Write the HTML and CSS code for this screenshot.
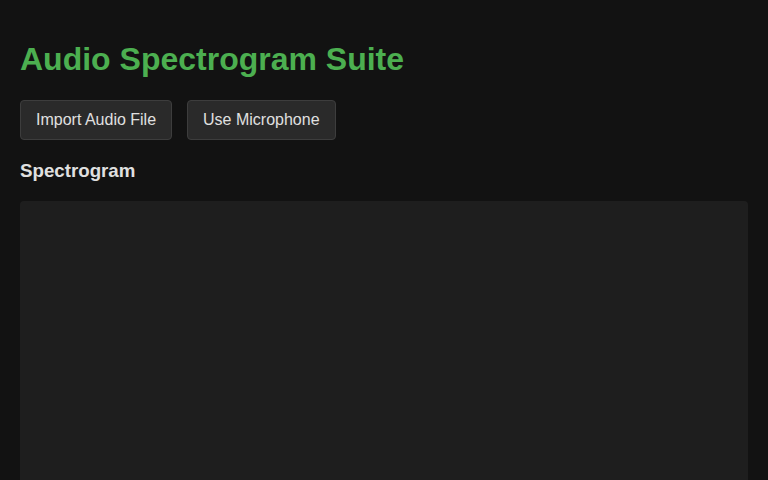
FILE: index.html
```html
<!DOCTYPE html>
<html lang="en">
<head>
<meta charset="utf-8">
<title>Audio Spectrogram Suite</title>
<link rel="stylesheet" href="styles.css">
</head>
<body>
  <h1 class="title">Audio Spectrogram Suite</h1>
  <div class="controls">
    <button class="btn">Import Audio File</button>
    <button class="btn">Use Microphone</button>
  </div>
  <h3 class="section-title">Spectrogram</h3>
  <div class="spectrogram"></div>
</body>
</html>
```

FILE: styles.css
```css
html, body {
  background: #121212;
}
body {
  margin: 0;
  padding: 20px;
  color: #e0e0e0;
  font-family: "Liberation Sans", Arial, sans-serif;
}
.title {
  color: #4caf50;
  font-size: 32px;
  font-weight: bold;
  margin: 21.44px 0;
}
.controls {
  display: flex;
  gap: 15px;
}
.btn {
  font-family: "Liberation Sans", Arial, sans-serif;
  font-size: 16px;
  color: #e0e0e0;
  background: #2a2a2a;
  border: 1px solid #3d3d3d;
  border-radius: 4px;
  padding: 10px 15px;
  line-height: 18px;
}
.section-title {
  font-size: 18.72px;
  font-weight: bold;
  margin: 19.7px 0 19px;
}
.spectrogram {
  height: 320px;
  background: #1e1e1e;
  border-radius: 4px;
}
```
